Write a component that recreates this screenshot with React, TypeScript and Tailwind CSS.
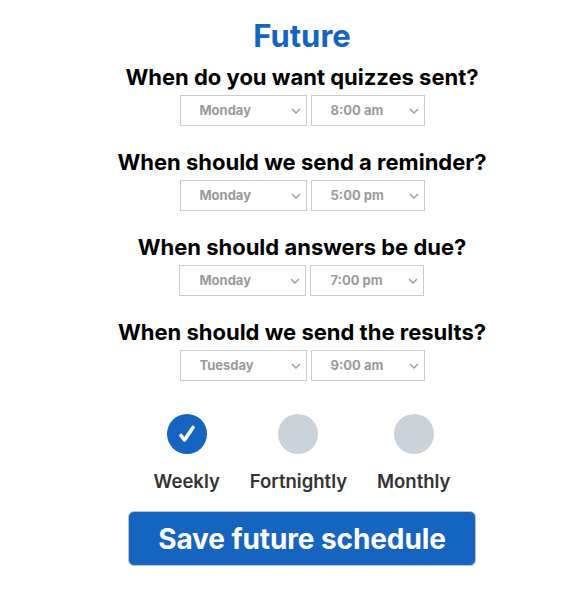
import React, { useState } from 'react';

const days = ['Monday', 'Tuesday', 'Wednesday', 'Thursday', 'Friday', 'Saturday', 'Sunday'];
const times = ['8:00 am', '9:00 am', '5:00 pm', '7:00 pm'];

const questions = [
  { label: 'When do you want quizzes sent?', day: 'Monday', time: '8:00 am' },
  { label: 'When should we send a reminder?', day: 'Monday', time: '5:00 pm' },
  { label: 'When should answers be due?', day: 'Monday', time: '7:00 pm' },
  { label: 'When should we send the results?', day: 'Tuesday', time: '9:00 am' },
];

function Chevron() {
  return (
    <svg className="pointer-events-none absolute right-[6px] top-1/2 -translate-y-1/2" width="10" height="6" viewBox="0 0 10 6" fill="none">
      <path d="M1 1l4 4 4-4" stroke="#9a9a9a" strokeWidth="1.4" />
    </svg>
  );
}

function Select({ value, options, width }: { value: string; options: string[]; width: string }) {
  return (
    <div className={`relative ${width}`}>
      <select
        defaultValue={value}
        className="h-[31px] w-full appearance-none border border-[#cccccc] bg-white pl-[19px] pr-5 text-left text-[13px] font-bold text-[#9a9a9a] outline-none"
      >
        {options.map((o) => (
          <option key={o} value={o}>{o}</option>
        ))}
      </select>
      <Chevron />
    </div>
  );
}

export default function App() {
  const [freq, setFreq] = useState('Weekly');

  return (
    <div className="min-h-[596px] bg-white pl-[38px] font-['Inter',sans-serif]">
      <div className="flex flex-col items-center pt-[18px]">
        <h1 className="text-[31px] font-bold leading-[36px] text-[#1565c0]">Future</h1>
        {questions.map((q, i) => (
          <div key={q.label} className={`flex flex-col items-center ${i === 0 ? 'mt-[9px]' : 'mt-[22px]'}`}>
            <h2 className="text-[22px] font-bold leading-[28px] text-black">{q.label}</h2>
            <div className="mt-[4px] flex gap-[4px]">
              <Select value={q.day} options={days} width="w-[127px]" />
              <Select value={q.time} options={times} width="w-[114px]" />
            </div>
          </div>
        ))}

        <div className="mt-[33px] flex gap-[30px]">
          {['Weekly', 'Fortnightly', 'Monthly'].map((f) => (
            <button key={f} type="button" onClick={() => setFreq(f)} className="flex flex-col items-center">
              <span className={`flex h-[40px] w-[40px] items-center justify-center rounded-full ${freq === f ? 'bg-[#1565c0]' : 'bg-[#cbd2da]'}`}>
                {freq === f && (
                  <svg width="22" height="22" viewBox="0 0 22 22" fill="none">
                    <path d="M5 12.5l3.5 4.5L17 4.5" stroke="white" strokeWidth="3.6" strokeLinecap="round" strokeLinejoin="round" />
                  </svg>
                )}
              </span>
              <span className="mt-[15px] text-[18.5px] font-semibold leading-[24px] text-[#333333]">{f}</span>
            </button>
          ))}
        </div>

        <button
          type="button"
          className="mt-[18px] h-[55px] w-[348px] rounded-[6px] border border-[#b5c4d6] bg-[#1565c0] text-[28px] font-bold tracking-[-0.1px] text-white"
        >
          Save future schedule
        </button>
      </div>
    </div>
  );
}
